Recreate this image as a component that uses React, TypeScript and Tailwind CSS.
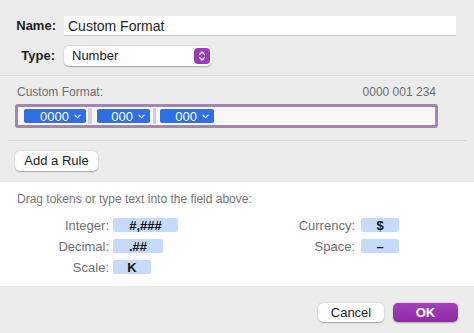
import React from "react";

const font = { fontFamily: '"Liberation Sans", Arial, sans-serif' };

function Chevron({ className = "" }: { className?: string }) {
  return (
    <svg width="7" height="5" viewBox="0 0 7 5" className={className}>
      <path d="M1 1.2 L3.5 3.6 L6 1.2" fill="none" stroke="white" strokeWidth="1.2" strokeLinecap="round" strokeLinejoin="round" />
    </svg>
  );
}

function Token({ text, w }: { text: string; w: string }) {
  return (
    <div className={`h-[14px] ${w} bg-[#2f6fe4] rounded-[2px] flex items-center justify-end pr-[5px] gap-[5px] text-white text-[13px] leading-none`}>
      <span>{text}</span>
      <Chevron />
    </div>
  );
}

function LightToken({ text, w }: { text: string; w: string }) {
  return (
    <div className={`h-[14px] ${w} bg-[#c5dafc] rounded-[2px] flex items-center justify-center text-[#111] text-[13px] font-bold leading-none`}>
      {text}
    </div>
  );
}

export default function App() {
  return (
    <div className="w-[474px] h-[333px] bg-[#ececec] flex flex-col overflow-hidden text-[#1d1d1d]" style={font}>
      {/* Section 1 */}
      <div className="h-[76px] pt-[16px] flex flex-col gap-[10px] border-b border-[#dcdcdc]">
        <div className="flex items-center h-[20px]">
          <div className="w-[56px] text-right font-bold text-[13px]">Name:</div>
          <div className="ml-[8px] w-[392px] h-[20px] bg-white border-b border-[#d0d0d0] flex items-center pl-[4px] pt-[1px] text-[14px]">
            Custom Format
          </div>
        </div>
        <div className="flex items-center h-[20px]">
          <div className="w-[55px] text-right font-bold text-[13px]">Type:</div>
          <div className="ml-[9px] w-[148px] h-[20px] bg-white rounded-[5px] shadow-[0_0.5px_1.5px_rgba(0,0,0,0.3)] flex items-center justify-between pl-[8px] pr-[2px] text-[13px]">
            <span>Number</span>
            <div className="w-[16px] h-[16px] rounded-[4px] bg-[#9a3ab8] flex items-center justify-center">
              <svg width="8" height="12" viewBox="0 0 8 12">
                <path d="M1.5 4.5 L4 2 L6.5 4.5 M1.5 7.5 L4 10 L6.5 7.5" fill="none" stroke="white" strokeWidth="1.3" strokeLinecap="round" strokeLinejoin="round" />
              </svg>
            </div>
          </div>
        </div>
      </div>

      {/* Section 2 */}
      <div className="h-[66px] px-[8px]">
        <div className="h-[65px] border-b border-[#d6d6d6] px-[7px] pt-[10px]">
          <div className="flex justify-between text-[12px] text-[#6e6e6e] leading-none pl-[2px] pr-[23px]">
            <span>Custom Format:</span>
            <span>0000 001 234</span>
          </div>
          <div className="mt-[6px] w-[423px] h-[24px] border-[3px] border-[#a683b0] rounded-[3px] bg-[#f7f7f7] flex items-center pl-[6px]">
            <Token text="0000" w="w-[62px]" />
            <div className="w-[4px] h-[16px] bg-[#dccadf] ml-[2px] mr-[5px]" />
            <Token text="000" w="w-[53px]" />
            <div className="w-[3px] h-[16px] bg-[#dccadf] ml-[3px] mr-[4px]" />
            <Token text="000" w="w-[54px]" />
          </div>
        </div>
      </div>

      {/* Section 3 */}
      <div className="h-[40px] px-[15px] pt-[9px]">
        <div className="w-[83px] h-[20px] bg-white rounded-[5px] shadow-[0_0.5px_1.5px_rgba(0,0,0,0.3)] flex items-center justify-center text-[13px]">
          Add a Rule
        </div>
      </div>

      {/* White section */}
      <div className="h-[104px] bg-white pt-[11px] pl-[17px]">
        <div className="text-[12px] text-[#767676] leading-none">Drag tokens or type text into the field above:</div>
        <div className="mt-[13px] flex">
          <div className="flex flex-col gap-[7px]">
            <div className="flex items-center">
              <div className="w-[92px] text-right text-[13px] text-[#707070] leading-none">Integer:</div>
              <div className="ml-[4px]"><LightToken text="#,###" w="w-[65px]" /></div>
            </div>
            <div className="flex items-center">
              <div className="w-[92px] text-right text-[13px] text-[#707070] leading-none">Decimal:</div>
              <div className="ml-[4px]"><LightToken text=".##" w="w-[50px]" /></div>
            </div>
            <div className="flex items-center">
              <div className="w-[92px] text-right text-[13px] text-[#707070] leading-none">Scale:</div>
              <div className="ml-[4px]"><LightToken text="K" w="w-[38px]" /></div>
            </div>
          </div>
          <div className="flex flex-col gap-[7px] ml-[87px]">
            <div className="flex items-center">
              <div className="w-[90px] text-right text-[13px] text-[#707070] leading-none">Currency:</div>
              <div className="ml-[6px]"><LightToken text="$" w="w-[38px]" /></div>
            </div>
            <div className="flex items-center">
              <div className="w-[90px] text-right text-[13px] text-[#707070] leading-none">Space:</div>
              <div className="ml-[6px]"><LightToken text="–" w="w-[38px]" /></div>
            </div>
          </div>
        </div>
      </div>

      {/* Footer */}
      <div className="flex-1 flex justify-end items-start pt-[17px] pr-[16px] gap-[9px]">
        <div className="w-[66px] h-[19px] bg-white rounded-[5px] shadow-[0_0.5px_1.5px_rgba(0,0,0,0.3)] flex items-center justify-center text-[13px]">
          Cancel
        </div>
        <div className="w-[65px] h-[19px] rounded-[5px] bg-gradient-to-b from-[#a53fbd] to-[#8e2aa6] shadow-[0_0.5px_1.5px_rgba(0,0,0,0.3)] flex items-center justify-center text-[13px] text-white font-bold">
          OK
        </div>
      </div>
    </div>
  );
}
